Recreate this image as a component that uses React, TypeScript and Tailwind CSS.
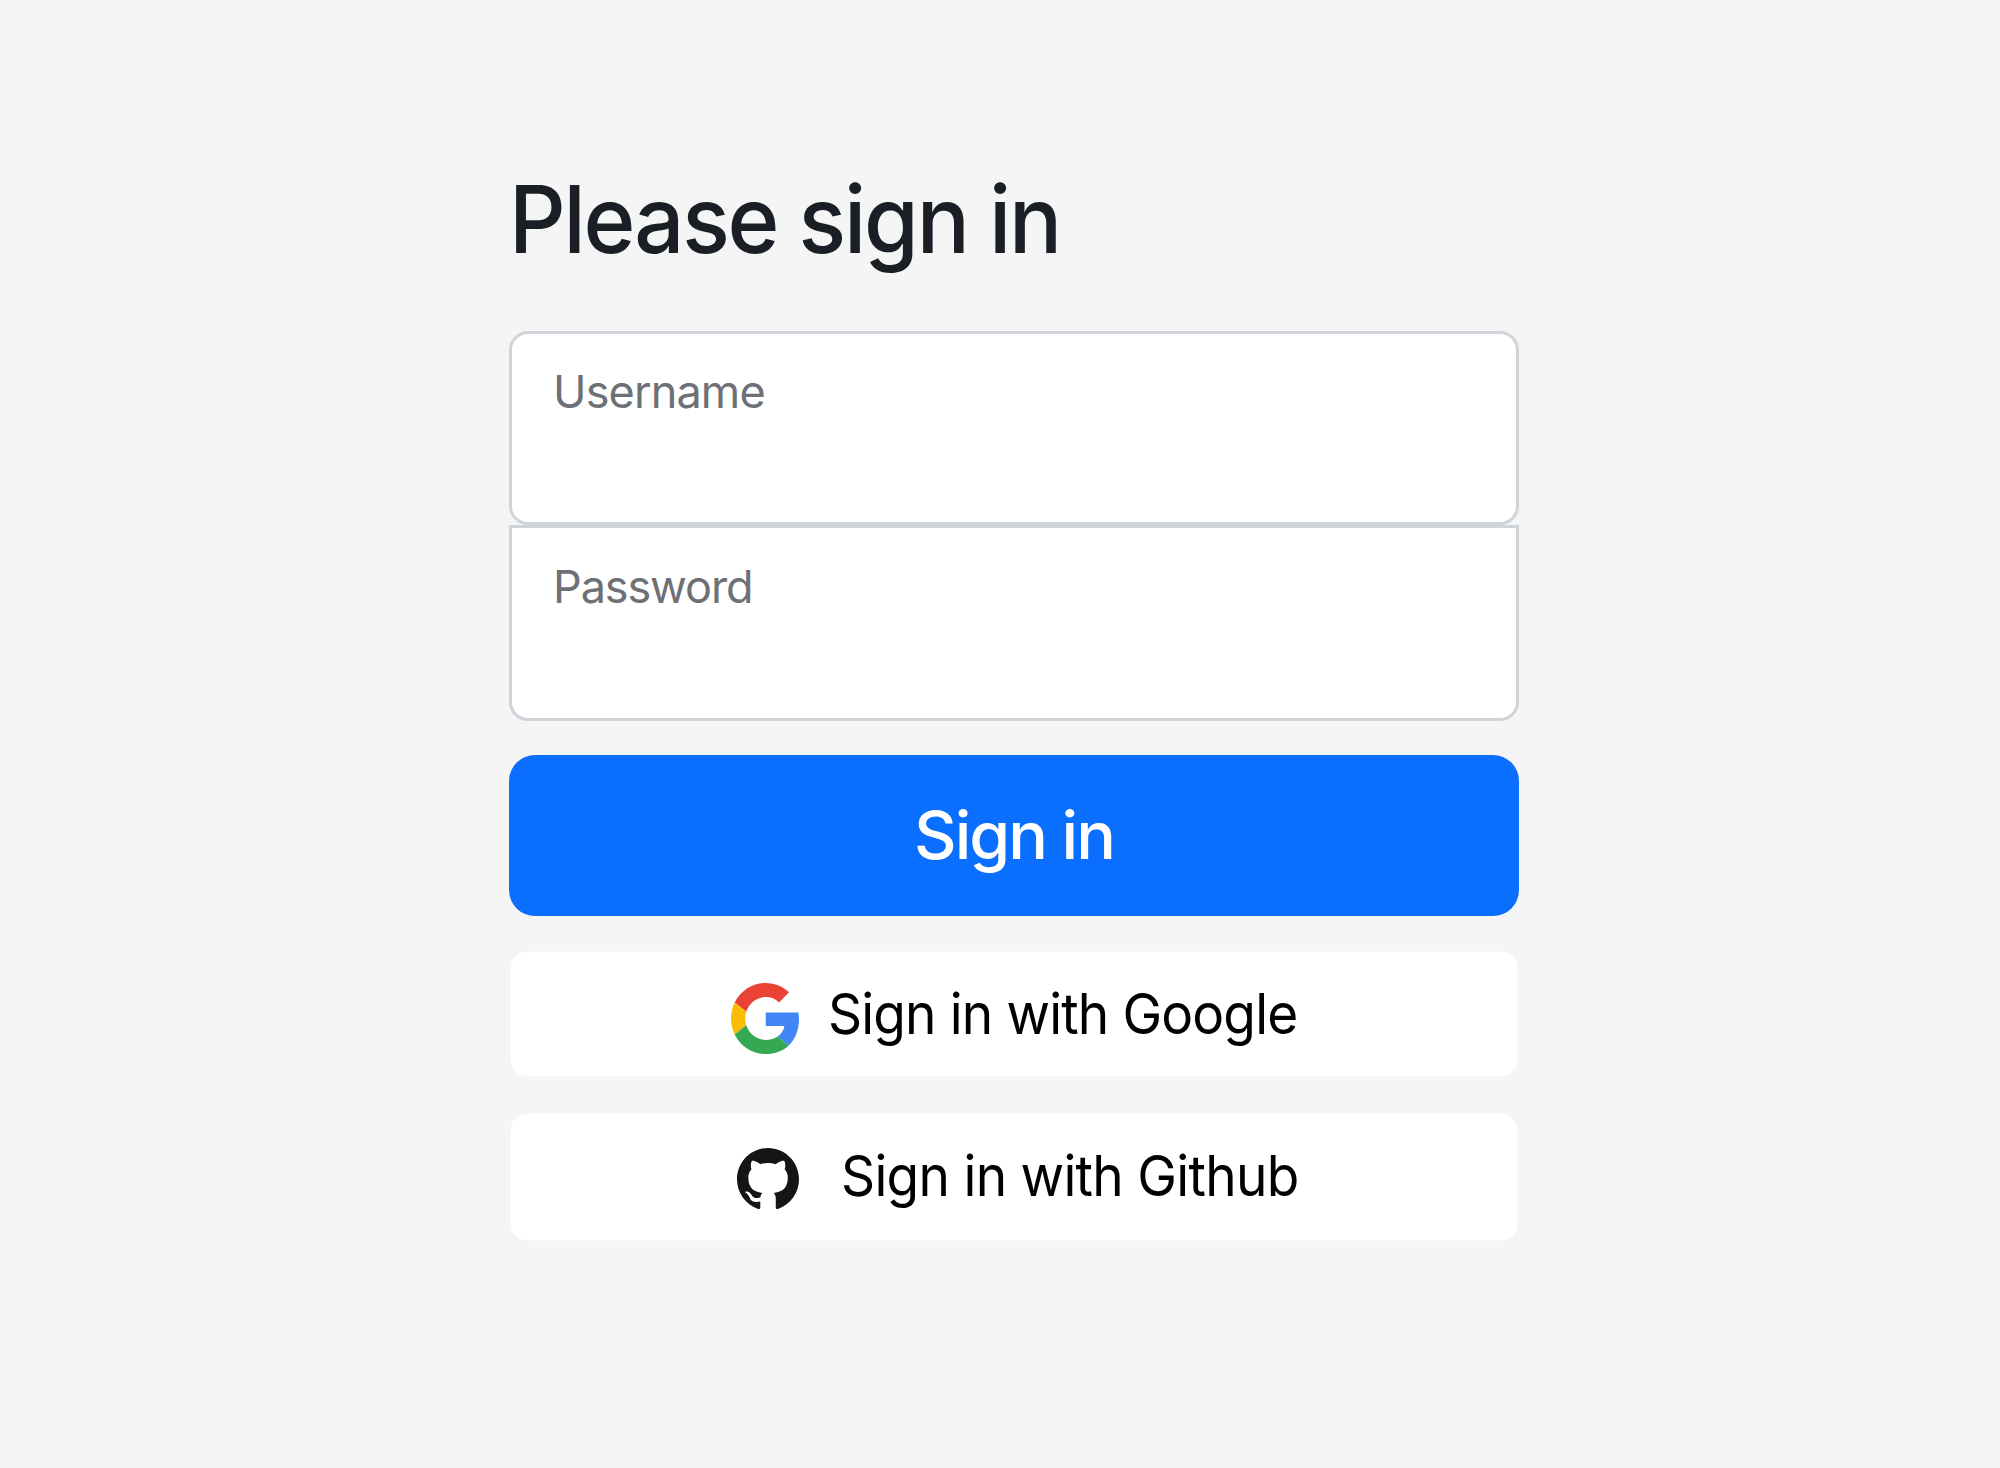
import type { ReactNode } from "react";

function GoogleLogo() {
  return (
    <svg className="h-[71px] w-[68px] shrink-0" viewBox="0 0 46.98 48" preserveAspectRatio="none" aria-hidden="true">
      <path fill="#EA4335" d="M24 9.5c3.54 0 6.71 1.22 9.21 3.6l6.85-6.85C35.9 2.38 30.47 0 24 0 14.62 0 6.51 5.38 2.56 13.22l7.98 6.19C12.43 13.72 17.74 9.5 24 9.5z" />
      <path fill="#4285F4" d="M46.98 24.55c0-1.57-.15-3.09-.38-4.55H24v9.02h12.94c-.58 2.96-2.26 5.48-4.78 7.18l7.73 6c4.51-4.18 7.09-10.36 7.09-17.65z" />
      <path fill="#FBBC05" d="M10.53 28.59c-.48-1.45-.76-2.99-.76-4.59s.27-3.14.76-4.59l-7.98-6.19C.92 16.46 0 20.12 0 24c0 3.88.92 7.54 2.56 10.78l7.97-6.19z" />
      <path fill="#34A853" d="M24 48c6.48 0 11.93-2.13 15.89-5.81l-7.73-6c-2.15 1.45-4.92 2.3-8.16 2.3-6.26 0-11.57-4.22-13.47-9.91l-7.98 6.19C6.51 42.62 14.62 48 24 48z" />
    </svg>
  );
}

function GithubLogo() {
  return (
    <svg className="h-[61px] w-[62px] shrink-0" viewBox="0 0 16 15.62" preserveAspectRatio="none" aria-hidden="true">
      <path fill="#161514" d="M8 0C3.58 0 0 3.58 0 8c0 3.54 2.29 6.53 5.47 7.59.4.07.55-.17.55-.38 0-.19-.01-.82-.01-1.49-2.01.37-2.53-.49-2.69-.94-.09-.23-.48-.94-.82-1.13-.28-.15-.68-.52-.01-.53.63-.01 1.08.58 1.23.82.72 1.21 1.87.87 2.33.66.07-.52.28-.87.51-1.07-1.78-.2-3.64-.89-3.64-3.95 0-.87.31-1.59.82-2.15-.08-.2-.36-1.02.08-2.12 0 0 .67-.21 2.2.82.64-.18 1.32-.27 2-.27s1.36.09 2 .27c1.53-1.04 2.2-.82 2.2-.82.44 1.1.16 1.92.08 2.12.51.56.82 1.27.82 2.15 0 3.07-1.87 3.75-3.65 3.95.29.25.54.73.54 1.48 0 1.07-.01 1.93-.01 2.2 0 .21.15.46.55.38A8.01 8.01 0 0 0 16 8c0-4.42-3.58-8-8-8z" />
    </svg>
  );
}

function Field({ label, className }: { label: string; className: string }) {
  return (
    <label className={`block border-[3px] border-[#ced4da] bg-white pl-[41px] ${className}`}>
      <span className="block text-[45px] leading-[55px] text-[#6d7074]">{label}</span>
    </label>
  );
}

function ProviderButton({ className, children }: { className: string; children: ReactNode }) {
  return (
    <button className={`flex w-[1008px] items-start rounded-[17px] border border-[#f9fafb] bg-white text-[56px] leading-[68px] whitespace-nowrap text-black ${className}`}>
      {children}
    </button>
  );
}

export default function App() {
  return (
    <main className="h-[1468px] w-[2000px] overflow-hidden bg-[#f5f5f5] pt-[163px] pl-[509px] font-['Inter','Liberation_Sans',sans-serif]">
      <form className="flex w-[1010px] flex-col" onSubmit={(e) => e.preventDefault()}>
        <h1 className="origin-left scale-x-95 text-[93px] leading-[112px] font-medium tracking-[-2.3px] whitespace-nowrap text-[#1a1f25]">
          Please sign in
        </h1>
        <Field label="Username" className="mt-14 h-[194px] rounded-[19px] pt-[30px] tracking-[-0.85px]" />
        <Field label="Password" className="h-[196px] rounded-b-[19px] pt-[31px] tracking-[-1.1px]" />
        <button className="mt-[34px] flex h-[161px] items-center justify-center rounded-[26px] bg-[#0a6eff] pb-[2px] text-[66px] leading-[80px] font-medium tracking-[-2px] text-white">
          Sign in
        </button>
        <ProviderButton className="mt-[35px] ml-px h-[126px] pt-[28px] pl-[220px]">
          <span className="pt-[3px]"><GoogleLogo /></span>
          <span className="ml-[29px] origin-left scale-x-95 tracking-[-0.9px]">Sign in with Google</span>
        </ProviderButton>
        <ProviderButton className="mt-[36px] ml-px h-[128px] pt-[28px] pl-[226px]">
          <span className="pt-[6px]"><GithubLogo /></span>
          <span className="ml-[42px] origin-left scale-x-95 tracking-[-0.75px]">Sign in with Github</span>
        </ProviderButton>
      </form>
    </main>
  );
}
